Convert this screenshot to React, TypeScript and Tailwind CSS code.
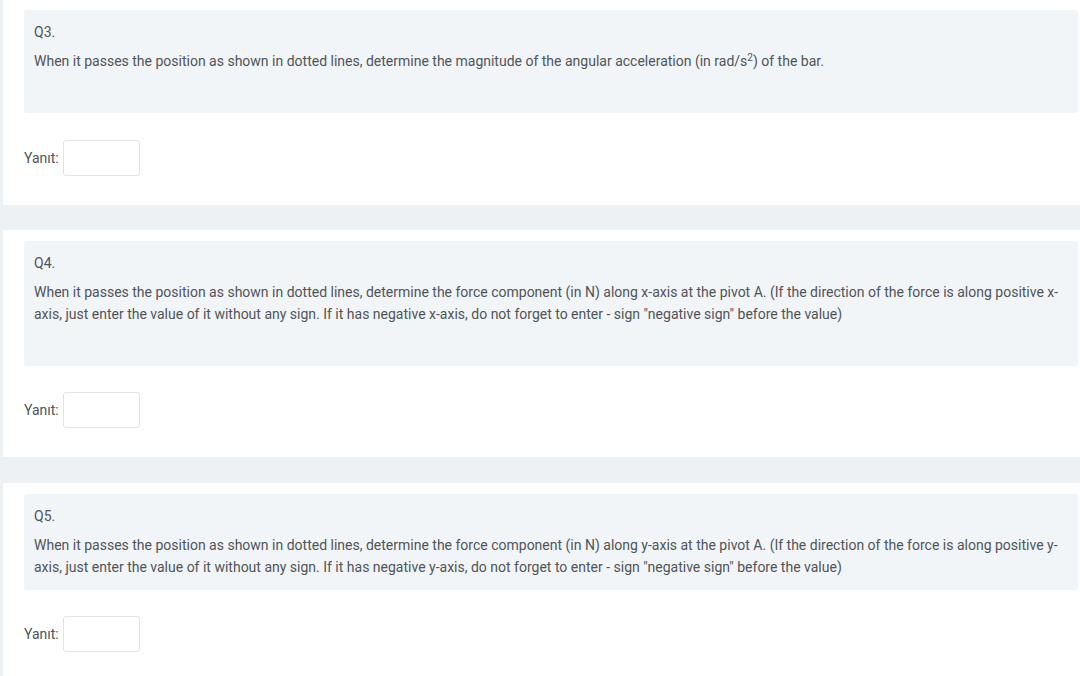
import React from "react";

const font = { fontFamily: "Roboto, 'Noto Sans', sans-serif" };

function Answer() {
  return (
    <div className="flex items-center h-[36px]">
      <span className="text-[14px] text-[#4f5459] mr-[4px]">Yanıt:</span>
      <input
        type="text"
        className="w-[77px] h-[36px] border border-[#e2e5e8] rounded-[3px] bg-white outline-none"
      />
    </div>
  );
}

function Card({
  label,
  lines,
  boxClass,
  cardClass,
  gapClass,
}: {
  label: string;
  lines: React.ReactNode;
  boxClass: string;
  cardClass: string;
  gapClass: string;
}) {
  return (
    <div className={`bg-white ml-[3px] pl-[21px] pr-[2px] ${cardClass}`}>
      <div className={`bg-[#f2f5f8] rounded-[3px] pl-[10px] pr-[12px] pt-[11px] ${boxClass}`}>
        <div className="text-[14px] leading-[22px] text-[#4f5459]">{label}</div>
        <div className="mt-[7px] text-[14px] leading-[22px] text-[#4f5459]">{lines}</div>
      </div>
      <div className={gapClass}>
        <Answer />
      </div>
    </div>
  );
}

export default function App() {
  return (
    <div className="w-[1080px] h-[676px] overflow-hidden bg-[#eef1f3]" style={font}>
      <Card
        label="Q3."
        lines={
          <>
            When it passes the position as shown in dotted lines, determine the magnitude of the angular acceleration (in rad/s
            <sup className="text-[10px]">2</sup>) of the bar.
          </>
        }
        boxClass="h-[103px]"
        cardClass="h-[205px] pt-[10px]"
        gapClass="pt-[27px]"
      />
      <div className="h-[25px]" />
      <Card
        label="Q4."
        lines={
          <>
            When it passes the position as shown in dotted lines, determine the force component (in N) along x-axis at the pivot A. (If the direction of the force is along positive x-axis, just enter the value of it without any sign. If it has negative x-axis, do not forget to enter - sign "negative sign" before the value)
          </>
        }
        boxClass="h-[125px]"
        cardClass="h-[227px] pt-[11px]"
        gapClass="pt-[26px]"
      />
      <div className="h-[26px]" />
      <Card
        label="Q5."
        lines={
          <>
            When it passes the position as shown in dotted lines, determine the force component (in N) along y-axis at the pivot A. (If the direction of the force is along positive y-axis, just enter the value of it without any sign. If it has negative y-axis, do not forget to enter - sign "negative sign" before the value)
          </>
        }
        boxClass="h-[96px]"
        cardClass="h-[200px] pt-[11px]"
        gapClass="pt-[26px]"
      />
    </div>
  );
}
